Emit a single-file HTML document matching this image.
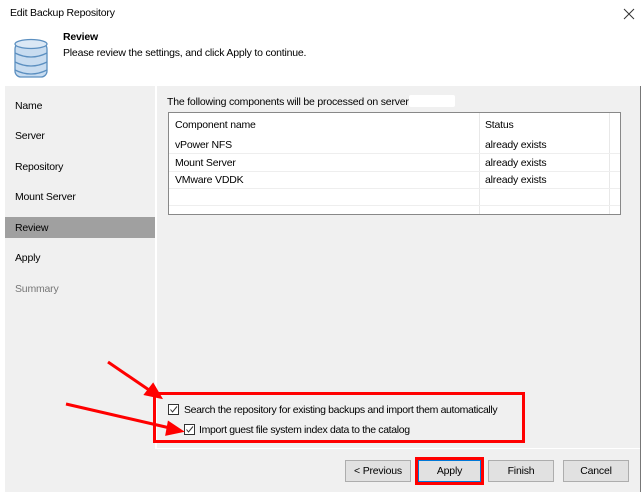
<!DOCTYPE html><html><head><style>
body{margin:0;width:641px;height:492px;position:relative;background:#fff;font-family:"Liberation Sans",sans-serif;font-size:10.5px;letter-spacing:-0.2px;color:#000;overflow:hidden}
div{position:absolute;box-sizing:border-box}
.t{white-space:nowrap}
.nav{left:15px}
.btn{top:460px;height:22px;background:#e1e1e1;border:1px solid #adadad;text-align:center;line-height:20px}
.cb{width:11px;height:11px;border:1px solid #333;background:#fff}
</style></head><body>
<div class="t" style="left:10px;top:7px">Edit Backup Repository</div>
<svg style="position:absolute;left:623px;top:8px" width="12" height="12"><path d="M1 1L11 11M11 1L1 11" stroke="#333" stroke-width="1"/></svg>
<svg style="position:absolute;left:14px;top:38px" width="34" height="42"><g fill="#c8dcf0" stroke="#5b8fc0" stroke-width="1.3"><rect x="1" y="5" width="32" height="34" rx="6"/></g><g fill="none" stroke="#5b8fc0" stroke-width="1.3"><ellipse cx="17" cy="6" rx="16" ry="4.5" fill="#dbe8f5"/><path d="M1 15q16 8 32 0M1 24q16 8 32 0M1 32q16 8 32 0"/></g></svg>
<div class="t" style="left:63px;top:31px;font-weight:bold">Review</div>
<div class="t" style="left:63px;top:47px">Please review the settings, and click Apply to continue.</div>
<div style="left:5px;top:86px;width:636px;height:406px;background:#f0f0f0;border-right:1px solid #777"></div>
<div style="left:155px;top:86px;width:2px;height:363px;background:#fff"></div>
<div style="left:155px;top:448px;width:485px;height:1px;background:#fff"></div>
<div class="t nav" style="top:100px">Name</div>
<div class="t nav" style="top:130px">Server</div>
<div class="t nav" style="top:161px">Repository</div>
<div class="t nav" style="top:191px">Mount Server</div>
<div style="left:5px;top:217px;width:150px;height:21px;background:#a0a0a0"></div>
<div class="t nav" style="top:222px">Review</div>
<div class="t nav" style="top:252px">Apply</div>
<div class="t nav" style="top:283px;color:#777">Summary</div>
<div class="t" style="left:167px;top:96px">The following components will be processed on server</div>
<div style="left:409px;top:95px;width:46px;height:12px;background:#fff;border-radius:2px"></div>
<div style="left:168px;top:112px;width:453px;height:103px;background:#fff;border:1px solid #888"></div>
<div style="left:479px;top:113px;width:1px;height:101px;background:#e8e8e8"></div>
<div style="left:609px;top:113px;width:1px;height:101px;background:#e8e8e8"></div>
<div style="left:169px;top:153px;width:451px;height:1px;background:#eee"></div>
<div style="left:169px;top:171px;width:451px;height:1px;background:#eee"></div>
<div style="left:169px;top:188px;width:451px;height:1px;background:#eee"></div>
<div style="left:169px;top:205px;width:451px;height:1px;background:#eee"></div>
<div class="t" style="left:175px;top:119px">Component name</div><div class="t" style="left:485px;top:119px">Status</div>
<div class="t" style="left:175px;top:139px">vPower NFS</div><div class="t" style="left:485px;top:139px">already exists</div>
<div class="t" style="left:175px;top:157px">Mount Server</div><div class="t" style="left:485px;top:157px">already exists</div>
<div class="t" style="left:175px;top:174px">VMware VDDK</div><div class="t" style="left:485px;top:174px">already exists</div>
<div class="cb" style="left:168px;top:404px"></div><svg style="position:absolute;left:169px;top:405px" width="9" height="9"><path d="M1.5 4.5L3.5 7L8 1.5" stroke="#333" fill="none"/></svg>
<div class="t" style="left:184px;top:404px;letter-spacing:-0.35px">Search the repository for existing backups and import them automatically</div>
<div class="cb" style="left:184px;top:424px"></div><svg style="position:absolute;left:185px;top:425px" width="9" height="9"><path d="M1.5 4.5L3.5 7L8 1.5" stroke="#333" fill="none"/></svg>
<div class="t" style="left:199px;top:424px;letter-spacing:-0.35px">Import guest file system index data to the catalog</div>
<div style="left:153px;top:392px;width:372px;height:51px;border:3px solid #f00"></div>
<svg style="position:absolute;left:0;top:0" width="641" height="492"><g stroke="#f00" stroke-width="3" fill="#f00"><line x1="108" y1="362" x2="152" y2="392"/><polygon points="160,397 146,394 153,385"/><line x1="66" y1="404" x2="170" y2="428"/><polygon points="181,431 167,434 169,423"/></g></svg>
<div class="btn" style="left:345px;width:66px">&lt; Previous</div>
<div class="btn" style="left:418px;width:63px;border-color:#0078d7">Apply</div>
<div style="left:415px;top:457px;width:69px;height:28px;border:3px solid #f00"></div>
<div class="btn" style="left:488px;width:66px">Finish</div>
<div class="btn" style="left:563px;width:66px">Cancel</div>
</body></html>
